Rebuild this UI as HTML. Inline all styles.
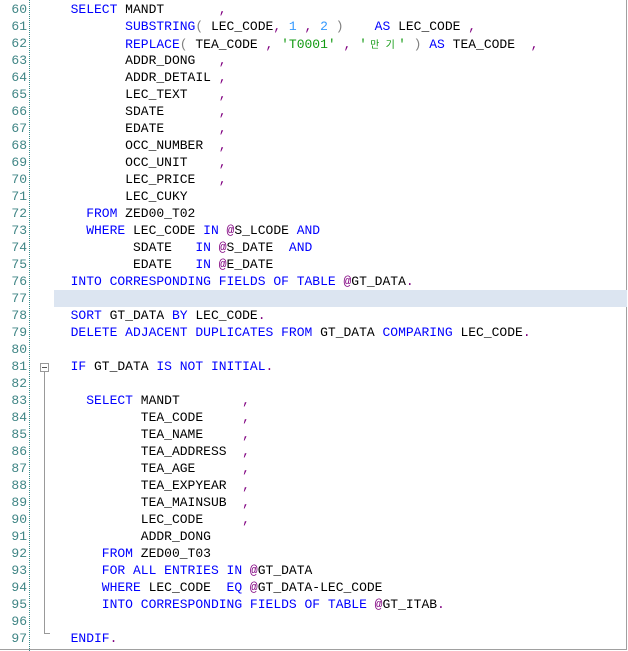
<!DOCTYPE html>
<html><head><meta charset="utf-8"><style>
html,body{margin:0;padding:0;background:#fff;}
body{width:628px;height:651px;position:relative;overflow:hidden;font-family:"Liberation Mono","DejaVu Sans Mono","Noto Sans Mono CJK KR","WenQuanYi Zen Hei Mono","Courier New",monospace;font-size:13px;}
.frame{position:absolute;left:0;top:0;width:626px;height:649px;border:1px solid #a0a0a0;border-left:none;border-top:none;}
.gut{position:absolute;left:29px;top:0;height:651px;border-left:1px dotted #3a8a8a;}
.hl{position:absolute;left:54px;top:290px;width:573px;height:17px;background:#dce5f1;}
.ln{position:absolute;left:0;width:27px;text-align:right;color:#3f8585;height:17px;line-height:17px;white-space:pre;}
.cd{position:absolute;left:55px;white-space:pre;height:17px;line-height:17px;color:#000;}
.ch{display:inline-block;width:7.8px;text-align:center;}
.wd{display:inline-block;width:15.6px;text-align:center;font-size:10px;font-family:"Noto Sans CJK KR",sans-serif;}
.k{color:#0000ff}.c{color:#800080}.n{color:#3399ff}.s{color:#119911}.p{color:#808080}
.fold{position:absolute;left:40px;top:363px;width:7px;height:7px;border:1px solid #999;background:#fff;}
.fold:after{content:"";position:absolute;left:1px;top:3px;width:5px;height:1px;background:#555;}
.vl{position:absolute;left:44px;top:372px;width:1px;height:262px;background:#999;}
.hz{position:absolute;left:44px;top:633px;width:6px;height:1px;background:#999;}
</style></head><body>
<div class="frame"></div>
<div class="hl"></div>
<div class="gut"></div>
<div class="fold"></div><div class="vl"></div><div class="hz"></div>
<div class="ln" style="top:1px">60</div><div class="cd" style="top:1px">  <span class="k">SELECT</span> MANDT       <span class="c">,</span></div>
<div class="ln" style="top:18px">61</div><div class="cd" style="top:18px">         <span class="k">SUBSTRING</span><span class="p">(</span> LEC_CODE<span class="c">,</span> <span class="n">1</span> <span class="c">,</span> <span class="n">2</span> <span class="p">)</span>    <span class="k">AS</span> LEC_CODE <span class="c">,</span></div>
<div class="ln" style="top:35px">62</div><div class="cd" style="top:35px">         <span class="k">REPLACE</span><span class="p">(</span> TEA_CODE <span class="c">,</span> <span class="s">'T0001'</span> <span class="c">,</span> <span class="s">'만기'</span> <span class="p">)</span> <span class="k">AS</span> TEA_CODE  <span class="c">,</span></div>
<div class="ln" style="top:52px">63</div><div class="cd" style="top:52px">         ADDR_DONG   <span class="c">,</span></div>
<div class="ln" style="top:69px">64</div><div class="cd" style="top:69px">         ADDR_DETAIL <span class="c">,</span></div>
<div class="ln" style="top:86px">65</div><div class="cd" style="top:86px">         LEC_TEXT    <span class="c">,</span></div>
<div class="ln" style="top:103px">66</div><div class="cd" style="top:103px">         SDATE       <span class="c">,</span></div>
<div class="ln" style="top:120px">67</div><div class="cd" style="top:120px">         EDATE       <span class="c">,</span></div>
<div class="ln" style="top:137px">68</div><div class="cd" style="top:137px">         OCC_NUMBER  <span class="c">,</span></div>
<div class="ln" style="top:154px">69</div><div class="cd" style="top:154px">         OCC_UNIT    <span class="c">,</span></div>
<div class="ln" style="top:171px">70</div><div class="cd" style="top:171px">         LEC_PRICE   <span class="c">,</span></div>
<div class="ln" style="top:188px">71</div><div class="cd" style="top:188px">         LEC_CUKY</div>
<div class="ln" style="top:205px">72</div><div class="cd" style="top:205px">    <span class="k">FROM</span> ZED00_T02</div>
<div class="ln" style="top:222px">73</div><div class="cd" style="top:222px">    <span class="k">WHERE</span> LEC_CODE <span class="k">IN</span> <span class="c">@</span>S_LCODE <span class="k">AND</span></div>
<div class="ln" style="top:239px">74</div><div class="cd" style="top:239px">          SDATE   <span class="k">IN</span> <span class="c">@</span>S_DATE  <span class="k">AND</span></div>
<div class="ln" style="top:256px">75</div><div class="cd" style="top:256px">          EDATE   <span class="k">IN</span> <span class="c">@</span>E_DATE</div>
<div class="ln" style="top:273px">76</div><div class="cd" style="top:273px">  <span class="k">INTO CORRESPONDING FIELDS OF TABLE</span> <span class="c">@</span>GT_DATA<span class="c">.</span></div>
<div class="ln" style="top:290px">77</div>
<div class="ln" style="top:307px">78</div><div class="cd" style="top:307px">  <span class="k">SORT</span> GT_DATA <span class="k">BY</span> LEC_CODE<span class="c">.</span></div>
<div class="ln" style="top:324px">79</div><div class="cd" style="top:324px">  <span class="k">DELETE ADJACENT DUPLICATES FROM</span> GT_DATA <span class="k">COMPARING</span> LEC_CODE<span class="c">.</span></div>
<div class="ln" style="top:341px">80</div>
<div class="ln" style="top:358px">81</div><div class="cd" style="top:358px">  <span class="k">IF</span> GT_DATA <span class="k">IS NOT INITIAL</span><span class="c">.</span></div>
<div class="ln" style="top:375px">82</div>
<div class="ln" style="top:392px">83</div><div class="cd" style="top:392px">    <span class="k">SELECT</span> MANDT        <span class="c">,</span></div>
<div class="ln" style="top:409px">84</div><div class="cd" style="top:409px">           TEA_CODE     <span class="c">,</span></div>
<div class="ln" style="top:426px">85</div><div class="cd" style="top:426px">           TEA_NAME     <span class="c">,</span></div>
<div class="ln" style="top:443px">86</div><div class="cd" style="top:443px">           TEA_ADDRESS  <span class="c">,</span></div>
<div class="ln" style="top:460px">87</div><div class="cd" style="top:460px">           TEA_AGE      <span class="c">,</span></div>
<div class="ln" style="top:477px">88</div><div class="cd" style="top:477px">           TEA_EXPYEAR  <span class="c">,</span></div>
<div class="ln" style="top:494px">89</div><div class="cd" style="top:494px">           TEA_MAINSUB  <span class="c">,</span></div>
<div class="ln" style="top:511px">90</div><div class="cd" style="top:511px">           LEC_CODE     <span class="c">,</span></div>
<div class="ln" style="top:528px">91</div><div class="cd" style="top:528px">           ADDR_DONG</div>
<div class="ln" style="top:545px">92</div><div class="cd" style="top:545px">      <span class="k">FROM</span> ZED00_T03</div>
<div class="ln" style="top:562px">93</div><div class="cd" style="top:562px">      <span class="k">FOR ALL ENTRIES IN</span> <span class="c">@</span>GT_DATA</div>
<div class="ln" style="top:579px">94</div><div class="cd" style="top:579px">      <span class="k">WHERE</span> LEC_CODE  <span class="k">EQ</span> <span class="c">@</span>GT_DATA-LEC_CODE</div>
<div class="ln" style="top:596px">95</div><div class="cd" style="top:596px">      <span class="k">INTO CORRESPONDING FIELDS OF TABLE</span> <span class="c">@</span>GT_ITAB<span class="c">.</span></div>
<div class="ln" style="top:613px">96</div>
<div class="ln" style="top:630px">97</div><div class="cd" style="top:630px">  <span class="k">ENDIF</span><span class="c">.</span></div>
<script>
(function(){
  var nodes=document.querySelectorAll('.cd, .ln');
  function walk(el){
    var kids=Array.prototype.slice.call(el.childNodes);
    kids.forEach(function(n){
      if(n.nodeType===3){
        var frag=document.createDocumentFragment();
        var t=n.nodeValue;
        for(var i=0;i<t.length;i++){
          var ch=t[i];
          var s=document.createElement('span');
          s.className=(ch.charCodeAt(0)>0x1100)?'wd':'ch';
          s.textContent=ch===' '?'\u00a0':ch;
          frag.appendChild(s);
        }
        el.replaceChild(frag,n);
      } else if(n.nodeType===1){ walk(n); }
    });
  }
  for(var i=0;i<nodes.length;i++) walk(nodes[i]);
})();
</script>
</body></html>
